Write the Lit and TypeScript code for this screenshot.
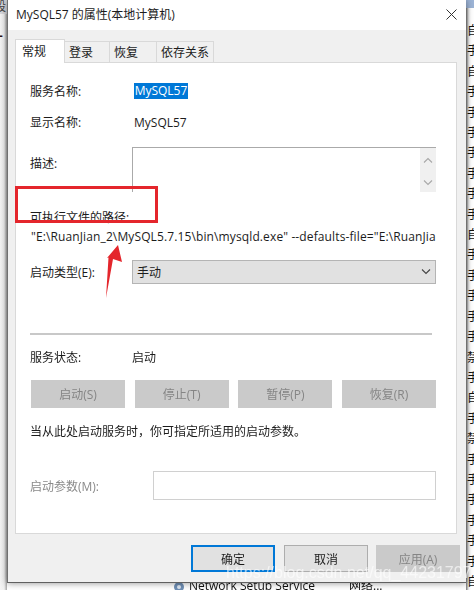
import { LitElement, html, css, svg } from "lit";
import { customElement } from "lit/decorators.js";

const chevron = (up: boolean) => svg`<svg class="chev" width="10" height="6" viewBox="0 0 10 6"><path d="${up ? "M1 5.5 L5 1.5 L9 5.5" : "M1 .5 L5 4.5 L9 .5"}" fill="none" stroke="currentColor" stroke-width="1.1"/></svg>`;

const sideGlyphs = "自手自手手手手手手手自手手手手手禁手自手禁手手手手手手自手".split("");

@customElement("app-root")
export class AppRoot extends LitElement {
  static styles = css`
    :host { display: block; width: 474px; height: 590px; overflow: hidden; position: relative; background: #fff;
      font-family: "Open Sans", "Noto Sans CJK SC", sans-serif; font-size: 12px; color: #1c1c1c; }
    .root { display: grid; grid-template-columns: 7px 459px 8px; grid-template-rows: 583px 7px; height: 590px; filter: blur(0.35px); position: relative; }
    .left { grid-column: 1; grid-row: 1 / 3; overflow: hidden; background: linear-gradient(90deg, #f4f4f4 0, #f0f0f0 60%, #a8a8a8 100%); font-weight: 700; line-height: 14px; }
    .left-top { background: #d8d8dc; height: 14px; color: #444; font-weight: 400; font-size: 12px; margin-left: -6px; white-space: nowrap; }
    .left-l { margin-top: 12px; color: #301010; margin-left: -4px; font-size: 12px; }
    .right { grid-column: 3; grid-row: 1 / 3; overflow: hidden; background: linear-gradient(90deg, #777 0, #eee 35%, #fff 60%); position: relative; }
    .right-top { height: 8px; background: #9db4d6; }
    .right-list { display: flex; flex-direction: column; margin-top: 13px; padding-left: 1px; color: #111; font-size: 12px; line-height: 20.4px; }
    .bottom { grid-column: 2; grid-row: 2; overflow: hidden; background: #fff; display: flex; color: #111; font-size: 12px; line-height: 14px; }
    .bottom-in { display: flex; align-items: flex-start; margin-top: -4px; padding-left: 164px; white-space: nowrap; }
    .bottom-svc { margin-left: 2px; width: 160px; }
    .win { grid-column: 2; grid-row: 1; background: #f0f0f0; border-left: 1px solid #707070; border-bottom: 1px solid #606060; box-shadow: 0 0 7px rgba(0,0,0,.45); display: flex; flex-direction: column; position: relative; z-index: 1; box-sizing: border-box; height: 583px; }
    .title { height: 30px; background: #fff; display: flex; align-items: center; justify-content: space-between; padding: 0 9px 2px 8px; box-sizing: border-box; font-size: 12px; flex: none; }
    .tabs { display: flex; align-items: flex-end; height: 32px; padding-left: 7px; flex: none; }
    .tab { height: 21px; box-sizing: border-box; border: 1px solid #d9d9d9; border-bottom: none; margin-right: -1px; display: flex; align-items: center; padding-left: 4px; background: #f0f0f0; }
    .tab.on { height: 24px; width: 50px; background: #fff; padding-bottom: 2px; margin-bottom: -1px; z-index: 1; padding-left: 6px; }
    .t2 { width: 46px; } .t3 { width: 48px; } .t4 { width: 58px; }
    .page { margin-left: 7px; width: 442px; height: 472px; box-sizing: border-box; background: #fff; border: 1px solid #d9d9d9; padding: 20px 20px 0 14px; display: flex; flex-direction: column; flex: none; }
    .row { display: flex; align-items: center; height: 16px; white-space: nowrap; }
    .lab { width: 102px; flex: none; }
    .sel { background: #0078d7; color: #fff; width: 54px; margin-left: 2px; height: 16px; line-height: 16px; text-align: center; }
    .val { margin-left: 2px; }
    .mt15 { margin-top: 15px; }
    .mt14 { margin-top: 14px; }
    .descrow { display: flex; height: 45px; margin-top: 17px; }
    .desclab { padding-top: 7px; }
    .desc { width: 304px; box-sizing: border-box; border-left: 1px solid #aaa; border-top: 1px solid #aaa; display: flex; justify-content: flex-end; }
    .scroll { width: 16px; background: #f0f0f0; display: flex; flex-direction: column; justify-content: space-between; align-items: center; padding: 9px 0 6px; box-sizing: border-box; color: #a8a8a8; }
    .mt17 { margin-top: 17px; }
    .path { margin: 4px 0 0 1px; width: 405px; overflow: hidden; display: block; line-height: 16px; letter-spacing: .12px; }
    .selectrow { display: flex; align-items: center; height: 24px; margin-top: 15px; }
    .select { width: 305px; height: 24px; box-sizing: border-box; background: #e1e1e1; border: 1px solid #b4b4b4; display: flex; align-items: center; justify-content: space-between; padding: 0 4px 0 4px; }
    .select .chev { color: #444; }
    .sep { height: 2px; width: 402px; background: #c8c8c8; margin-top: 49px; flex: none; }
    .btns { display: flex; justify-content: space-between; width: 405px; margin: 15px 0 0 1px; }
    .sb { width: 94px; height: 28px; background: #cacaca; color: #858585; display: flex; align-items: center; justify-content: center; }
    .hint { margin-top: 15px; }
    .paramrow { display: flex; align-items: center; margin-top: 32px; height: 29px; color: #8a8a8a; }
    .plab { width: 123px; flex: none; }
    .input { width: 284px; height: 29px; box-sizing: border-box; border: 1px solid #d0d0d0; background: #fff; }
    .foot { display: flex; margin-top: 11px; padding-left: 183px; gap: 8px; }
    .fb { width: 84px; height: 27px; box-sizing: border-box; display: flex; align-items: center; justify-content: center; background: #e1e1e1; border: 1px solid #adadad; }
    .fb.def { border: 2px solid #0078d7; margin-right: 1px; }
    .fb.dis { background: #cacaca; border-color: #cacaca; color: #858585; }
    .redbox { position: absolute; z-index: 2; left: 15px; top: 186px; width: 143px; height: 37px; box-sizing: border-box; border: 3px solid #e4262c; pointer-events: none; }
    .arrow { position: absolute; z-index: 2; left: 100px; top: 240px; }
    .mark { position: absolute; z-index: 2; left: 226px; top: 564px; font-size: 16px; color: rgba(255,255,255,.62); white-space: nowrap; font-family: "Liberation Sans", sans-serif; }
  `;

  render() {
    return html`<div class="root">
      <div class="left"><div class="left-top">段</div><div class="left-l">L</div></div>
      <div class="win">
        <div class="title"><span>MySQL57 的属性(本地计算机)</span>
          <svg width="11" height="11" viewBox="0 0 11 11"><path d="M.5 .5 L10.5 10.5 M10.5 .5 L.5 10.5" stroke="#333" stroke-width="1" fill="none"/></svg>
        </div>
        <div class="tabs">
          <div class="tab on">常规</div><div class="tab t2">登录</div><div class="tab t3">恢复</div><div class="tab t4">依存关系</div>
        </div>
        <div class="page">
          <div class="row"><span class="lab">服务名称:</span><span class="sel">MySQL57</span></div>
          <div class="row mt15"><span class="lab">显示名称:</span><span class="val">MySQL57</span></div>
          <div class="descrow"><span class="lab desclab">描述:</span>
            <div class="desc"><div class="scroll">${chevron(true)}${chevron(false)}</div></div></div>
          <div class="row mt17">可执行文件的路径:</div>
          <div class="row path">"E:\\RuanJian_2\\MySQL5.7.15\\bin\\mysqld.exe" --defaults-file="E:\\RuanJian_2\\MySQL5.7.15\\my.ini" MySQL57</div>
          <div class="selectrow"><span class="lab">启动类型(E):</span><div class="select"><span>手动</span>${chevron(false)}</div></div>
          <div class="sep"></div>
          <div class="row mt14"><span class="lab">服务状态:</span><span>启动</span></div>
          <div class="btns"><div class="sb">启动(S)</div><div class="sb">停止(T)</div><div class="sb">暂停(P)</div><div class="sb">恢复(R)</div></div>
          <div class="row hint">当从此处启动服务时，你可指定所适用的启动参数。</div>
          <div class="paramrow"><span class="plab">启动参数(M):</span><div class="input"></div></div>
        </div>
        <div class="foot"><div class="fb def">确定</div><div class="fb">取消</div><div class="fb dis">应用(A)</div></div>
      </div>
      <div class="right"><div class="right-top"></div>
        <div class="right-list">${sideGlyphs.map((g) => html`<span>${g}</span>`)}</div></div>
      <div class="bottom"><div class="bottom-in">
        <svg width="16" height="14" viewBox="0 0 16 14"><circle cx="8" cy="8" r="5" fill="#6f8fb5"/><circle cx="8" cy="8" r="2" fill="#dfe8f2"/></svg>
        <span class="bottom-svc">Network Setup Service</span><span>网络...</span>
      </div></div>
      <div class="redbox"></div>
      <svg class="arrow" width="30" height="60" viewBox="100 240 30 60"><polygon points="118,245 122,262 113,259 106,298 108.5,257.5 107,258" fill="#e4262c"/></svg>
      <div class="mark">https://blog.csdn.net/qq_44231797</div>
    </div>`;
  }
}
